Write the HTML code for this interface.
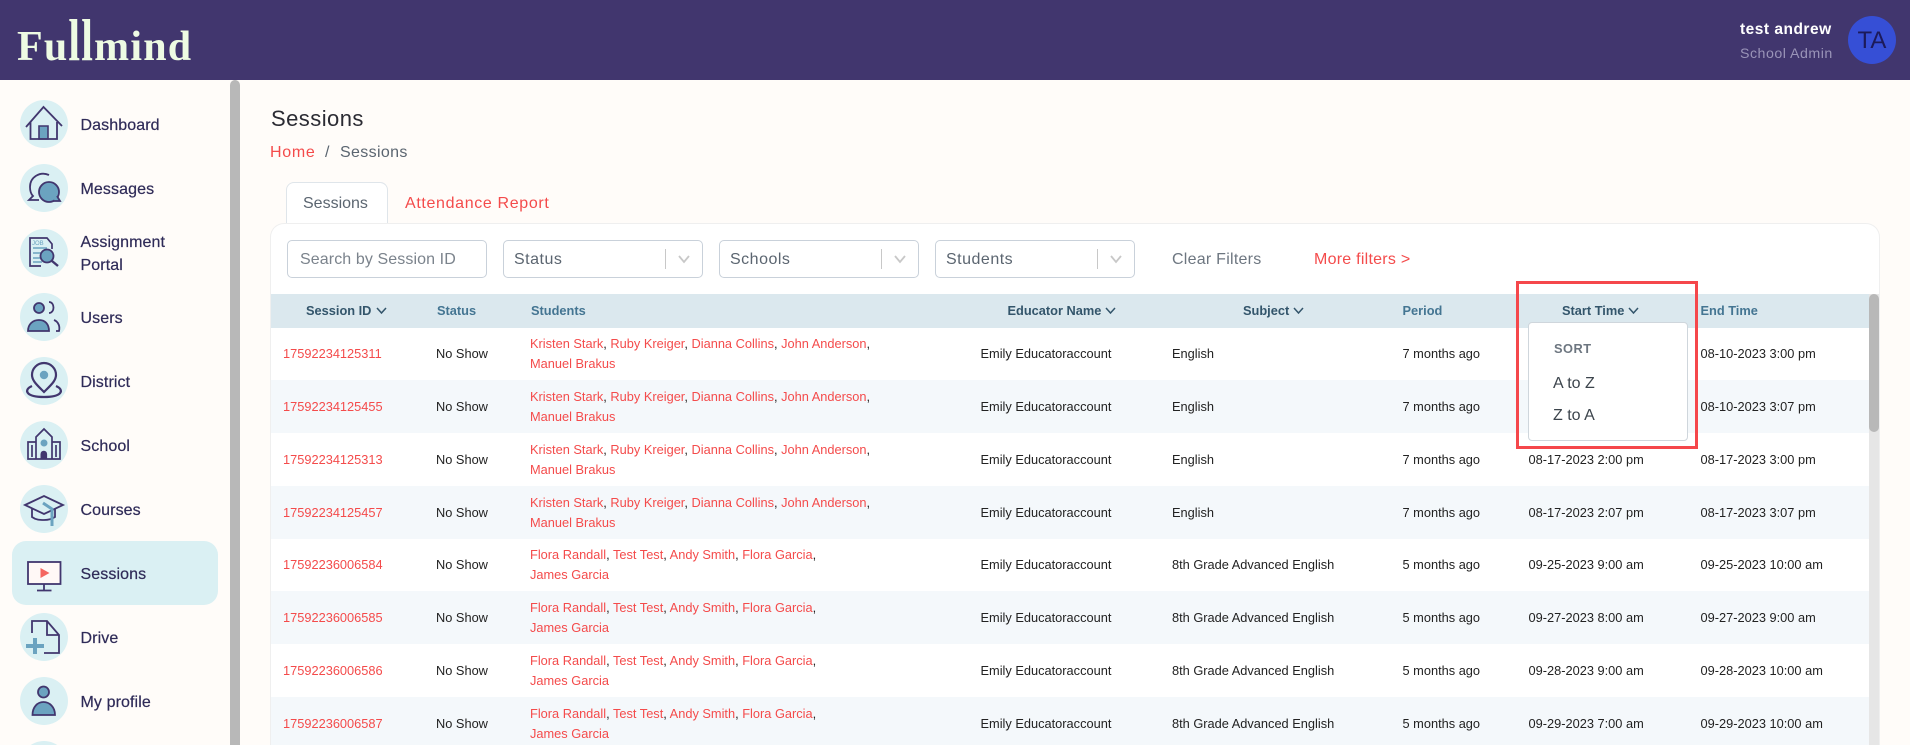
<!DOCTYPE html>
<html style="width:1910px;height:745px;overflow:hidden"><head><meta charset="utf-8"><title>Sessions</title>
<style>
html,body{margin:0;padding:0}
body{position:relative;width:1910px;height:745px;overflow:hidden;background:#fffcf9;font-family:"Liberation Sans",sans-serif;color:#222}
#w{position:absolute;left:0;top:0;width:1910px;height:745px;overflow:hidden}
.a{position:absolute}
.t{position:absolute;white-space:nowrap}
.nav{left:80.5px;font-size:16px;line-height:23px;color:#2f2b58;letter-spacing:.1px;-webkit-text-stroke:.2px #2f2b58}
.ic{position:absolute;left:20px;width:48px;height:48px}
.box{position:absolute;top:240px;height:36px;background:#fff;border:1px solid #c9d1da;border-radius:5px}
.fl{top:250px;font-size:16px;line-height:20px;color:#5b6570}
.sep{position:absolute;top:249px;width:1px;height:20px;background:#c8c8c8}
.c{position:absolute;white-space:nowrap;font-size:12.8px;line-height:19.5px;color:#222}
.r{color:#f44b4b}
.h{position:absolute;top:302px;font-size:12.8px;line-height:18px;font-weight:bold;white-space:nowrap}
.d{color:#33556b}.l{color:#447592}
</style></head><body><div id="w">

<div class="a" style="left:0;top:0;width:1910px;height:80px;background:#41366e"></div>
<!-- logo -->
<div class="t" style="left:17px;top:23px;font:bold 42px/48px 'Liberation Serif',serif;color:#eefbe3;letter-spacing:1.2px">Fu<span style="display:inline-block;transform:scaleY(1.4);transform-origin:50% 78%">ll</span>mind</div>

<div class="t" style="left:1740px;top:20px;font-size:15.5px;line-height:20px;font-weight:bold;color:#fff;letter-spacing:.5px">test andrew</div>
<div class="t" style="left:1740px;top:44px;font-size:14.2px;line-height:20px;color:#9a94b8;letter-spacing:.5px">School Admin</div>
<div class="a" style="left:1848px;top:16px;width:48px;height:48px;border-radius:50%;background:#364fd6;text-align:center;font-size:24px;line-height:50px;color:#1c1a5a">TA</div>

<!-- sidebar -->
<div class="a" style="left:230px;top:80px;width:10px;height:665px;background:#b8b8b8;border-radius:5px 5px 0 0"></div>
<div class="a" style="left:12px;top:541px;width:206px;height:64px;background:#daf0f3;border-radius:14px"></div>

<svg class="ic" style="top:100px" viewBox="0 0 48 48"><circle cx="24" cy="24" r="24" fill="#daf0f3"/><path d="M19 26h9v13h-9z" fill="#6ba3c0" stroke="#41366e" stroke-width="1.6"/><path d="M6 27L23.5 7 42 26M10.5 22v17h26.500V22" fill="none" stroke="#41366e" stroke-width="1.8"/></svg>
<div class="t nav" style="top:114px">Dashboard</div>

<svg class="ic" style="top:164px" viewBox="0 0 48 48"><circle cx="24" cy="24" r="24" fill="#daf0f3"/><path d="M29 11C20 7 10 13 10 23c0 5 2 8 3 9l-4 4h10" fill="none" stroke="#41366e" stroke-width="1.8"/><circle cx="29" cy="28" r="10" fill="#6ba3c0" stroke="#41366e" stroke-width="1.8"/><path d="M33 37h7l-3-5" fill="#6ba3c0" stroke="#41366e" stroke-width="1.8"/></svg>
<div class="t nav" style="top:178px">Messages</div>

<svg class="ic" style="top:229px" viewBox="0 0 48 48"><circle cx="24" cy="24" r="24" fill="#daf0f3"/><path d="M21 37H10V9h17l5 6v5" fill="none" stroke="#41366e" stroke-width="1.7"/><path d="M13 19h14M13 24h8M13 29h7M13 33h9" stroke="#6ba3c0" stroke-width="1.6"/><text x="12" y="16" font-size="6" font-family="Liberation Sans" fill="#6ba3c0">JOB</text><circle cx="27" cy="27" r="6.500" fill="#6ba3c0" stroke="#41366e" stroke-width="1.8"/><path d="M32 32l6 5" stroke="#41366e" stroke-width="2.400"/></svg>
<div class="t nav" style="top:231px">Assignment</div>
<div class="t nav" style="top:254px">Portal</div>

<svg class="ic" style="top:293px" viewBox="0 0 48 48"><circle cx="24" cy="24" r="24" fill="#daf0f3"/><circle cx="19" cy="15" r="5" fill="#6ba3c0" stroke="#41366e" stroke-width="1.800"/><path d="M8 38c0-7 5-11 11-11s10 4 10 11z" fill="#6ba3c0" stroke="#41366e" stroke-width="1.800"/><path d="M29 9c6 0 6 11 0 11M34 27c5 2 6 7 5 11h-3" fill="none" stroke="#41366e" stroke-width="1.800"/></svg>
<div class="t nav" style="top:307px">Users</div>

<svg class="ic" style="top:357px" viewBox="0 0 48 48"><circle cx="24" cy="24" r="24" fill="#daf0f3"/><path d="M24 35C18 29 12 24 12 18a12 12 0 0 1 24 0c0 6-6 11-12 17z" fill="#daf0f3" stroke="#41366e" stroke-width="2.200"/><circle cx="24" cy="18" r="4.200" fill="#6ba3c0"/><path d="M12 29c-9 4-6 11 12 11s21-7 12-11" fill="none" stroke="#41366e" stroke-width="2.200"/></svg>
<div class="t nav" style="top:371px">District</div>

<svg class="ic" style="top:421px" viewBox="0 0 48 48"><circle cx="24" cy="24" r="24" fill="#daf0f3"/><path d="M16 38V16l8-8 8 8v22M16 21H8v17h32V21h-8M12 24v12M36 24v12" fill="none" stroke="#41366e" stroke-width="1.700"/><circle cx="24" cy="22" r="3.500" fill="#6ba3c0"/><path d="M20.500 38v-5a3.300 3.300 0 0 1 6.600 0v5z" fill="#41366e"/></svg>
<div class="t nav" style="top:435px">School</div>

<svg class="ic" style="top:485px" viewBox="0 0 48 48"><circle cx="24" cy="24" r="24" fill="#daf0f3"/><path d="M5 20l19-9 19 9-19 9z" fill="none" stroke="#41366e" stroke-width="1.800"/><path d="M12 24v8c4 3 8 3 12 3s8-1 11-3v-8" fill="none" stroke="#41366e" stroke-width="1.800"/><path d="M23 18l9 6v17" fill="none" stroke="#6ba3c0" stroke-width="3"/></svg>
<div class="t nav" style="top:499px">Courses</div>

<svg class="a" style="left:20px;top:549px" width="48" height="48" viewBox="0 0 48 48"><rect x="8" y="13" width="32.500" height="22" fill="#fff8f6" stroke="#41366e" stroke-width="1.800"/><path d="M24 35v6M17 41.500h14.500" stroke="#41366e" stroke-width="1.800"/><path d="M20.500 19l9 5-9 5z" fill="#f4655f"/></svg>
<div class="t nav" style="top:563px">Sessions</div>

<svg class="ic" style="top:613px" viewBox="0 0 48 48"><circle cx="24" cy="24" r="24" fill="#daf0f3"/><path d="M12 20V8h15l12 14v18H24M27 8v14h12" fill="none" stroke="#41366e" stroke-width="1.800"/><path d="M15 25v16M6 33h18" stroke="#6ba3c0" stroke-width="4"/></svg>
<div class="t nav" style="top:627px">Drive</div>

<svg class="ic" style="top:677px" viewBox="0 0 48 48"><circle cx="24" cy="24" r="24" fill="#daf0f3"/><circle cx="23.500" cy="15" r="5.500" fill="#6ba3c0" stroke="#41366e" stroke-width="1.800"/><path d="M12.500 38c0-8 5-13 11-13s11.500 5 11.500 13z" fill="#6ba3c0" stroke="#41366e" stroke-width="1.800"/></svg>
<div class="t nav" style="top:691px">My profile</div>
<svg class="a" style="left:20px;top:741px" width="48" height="4" viewBox="0 0 48 4"><circle cx="24" cy="24" r="24" fill="#daf0f3"/></svg>

<!-- page head -->
<div class="t" style="left:271px;top:105px;font-size:22px;line-height:28px;color:#2b2b33;letter-spacing:.45px">Sessions</div>
<div class="t" style="left:270px;top:143px;font-size:16px;line-height:20px;color:#f44b4b;letter-spacing:.7px">Home</div>
<div class="t" style="left:325px;top:143px;font-size:16px;line-height:20px;color:#5b6570">/</div>
<div class="t" style="left:340px;top:143px;font-size:16px;line-height:20px;color:#5b6570;letter-spacing:.35px">Sessions</div>

<!-- tabs -->
<div class="a" style="left:286px;top:182px;width:102px;height:45px;box-sizing:border-box;background:#fff;border:1px solid #dfe5ea;border-bottom:0;border-radius:8px 8px 0 0"></div>
<div class="t" style="left:303px;top:194px;font-size:16px;line-height:20px;color:#5b6570">Sessions</div>
<div class="t" style="left:405px;top:194px;font-size:16px;line-height:20px;color:#f44b4b;letter-spacing:.65px">Attendance Report</div>

<!-- card -->
<div class="a" style="left:270px;top:223px;width:1610px;height:522px;box-sizing:border-box;background:#fff;border:1px solid #efefef;border-bottom:0;border-radius:14px 14px 0 0"></div>

<div class="box" style="left:287px;width:198px"></div>
<div class="t fl" style="left:300px;color:#7b838c;letter-spacing:.1px">Search by Session ID</div>
<div class="box" style="left:503px;width:198px"></div><div class="t fl" style="left:514px;letter-spacing:.5px">Status</div><div class="sep" style="left:665px"></div>
<svg class="a" style="left:678px;top:254px" width="12" height="10"><path d="M1 2l5 6 5-6" fill="none" stroke="#c8c8c8" stroke-width="1.800"/></svg>
<div class="box" style="left:719px;width:198px"></div><div class="t fl" style="left:730px;letter-spacing:.5px">Schools</div><div class="sep" style="left:881px"></div>
<svg class="a" style="left:894px;top:254px" width="12" height="10"><path d="M1 2l5 6 5-6" fill="none" stroke="#c8c8c8" stroke-width="1.800"/></svg>
<div class="box" style="left:935px;width:198px"></div><div class="t fl" style="left:946px;letter-spacing:.5px">Students</div><div class="sep" style="left:1097px"></div>
<svg class="a" style="left:1110px;top:254px" width="12" height="10"><path d="M1 2l5 6 5-6" fill="none" stroke="#c8c8c8" stroke-width="1.800"/></svg>
<div class="t fl" style="left:1172px;color:#6d7680;letter-spacing:.25px">Clear Filters</div>
<div class="t fl" style="left:1314px;color:#f44b4b;letter-spacing:.25px">More filters &gt;</div>

<!-- table head -->
<div class="a" style="left:271px;top:294px;width:1598px;height:34px;background:#dbe8ee"></div>
<div class="h d" style="left:306px">Session ID</div>
<svg class="a" style="left:376px;top:307px" width="11" height="8"><path d="M1 1l4.500 5L10 1" fill="none" stroke="#33556b" stroke-width="1.500"/></svg>
<div class="h l" style="left:437px">Status</div>
<div class="h l" style="left:531px">Students</div>
<div class="h d" style="left:1007.500px">Educator Name</div>
<svg class="a" style="left:1105px;top:307px" width="11" height="8"><path d="M1 1l4.500 5L10 1" fill="none" stroke="#33556b" stroke-width="1.500"/></svg>
<div class="h d" style="left:1243px">Subject</div>
<svg class="a" style="left:1293px;top:307px" width="11" height="8"><path d="M1 1l4.500 5L10 1" fill="none" stroke="#33556b" stroke-width="1.500"/></svg>
<div class="h l" style="left:1402.500px">Period</div>
<div class="h d" style="left:1562px">Start Time</div>
<svg class="a" style="left:1628px;top:307px" width="11" height="8"><path d="M1 1l4.500 5L10 1" fill="none" stroke="#33556b" stroke-width="1.500"/></svg>
<div class="h l" style="left:1700.500px">End Time</div>

<!-- rows backgrounds -->
<div class="a" style="left:271px;top:380px;width:1598px;height:53px;background:#f4f8fb"></div>
<div class="a" style="left:271px;top:486px;width:1598px;height:53px;background:#f4f8fb"></div>
<div class="a" style="left:271px;top:591px;width:1598px;height:53px;background:#f4f8fb"></div>
<div class="a" style="left:271px;top:697px;width:1598px;height:48px;background:#f4f8fb"></div>

<!-- row 1 -->
<div class="c r" style="left:283px;top:344px">17592234125311</div><div class="c" style="left:436px;top:344px">No Show</div>
<div class="c" style="left:530px;top:334px"><span class="r">Kristen Stark</span>, <span class="r">Ruby Kreiger</span>, <span class="r">Dianna Collins</span>, <span class="r">John Anderson</span>,<br><span class="r">Manuel Brakus</span></div>
<div class="c" style="left:980.500px;top:344px">Emily Educatoraccount</div><div class="c" style="left:1172px;top:344px">English</div><div class="c" style="left:1402.500px;top:344px">7 months ago</div><div class="c" style="left:1528.500px;top:344px">08-10-2023 2:00 pm</div><div class="c" style="left:1700.500px;top:344px">08-10-2023 3:00 pm</div>
<!-- row 2 -->
<div class="c r" style="left:283px;top:397px">17592234125455</div><div class="c" style="left:436px;top:397px">No Show</div>
<div class="c" style="left:530px;top:387px"><span class="r">Kristen Stark</span>, <span class="r">Ruby Kreiger</span>, <span class="r">Dianna Collins</span>, <span class="r">John Anderson</span>,<br><span class="r">Manuel Brakus</span></div>
<div class="c" style="left:980.500px;top:397px">Emily Educatoraccount</div><div class="c" style="left:1172px;top:397px">English</div><div class="c" style="left:1402.500px;top:397px">7 months ago</div><div class="c" style="left:1528.500px;top:397px">08-10-2023 2:07 pm</div><div class="c" style="left:1700.500px;top:397px">08-10-2023 3:07 pm</div>
<!-- row 3 -->
<div class="c r" style="left:283px;top:450px">17592234125313</div><div class="c" style="left:436px;top:450px">No Show</div>
<div class="c" style="left:530px;top:440px"><span class="r">Kristen Stark</span>, <span class="r">Ruby Kreiger</span>, <span class="r">Dianna Collins</span>, <span class="r">John Anderson</span>,<br><span class="r">Manuel Brakus</span></div>
<div class="c" style="left:980.500px;top:450px">Emily Educatoraccount</div><div class="c" style="left:1172px;top:450px">English</div><div class="c" style="left:1402.500px;top:450px">7 months ago</div><div class="c" style="left:1528.500px;top:450px">08-17-2023 2:00 pm</div><div class="c" style="left:1700.500px;top:450px">08-17-2023 3:00 pm</div>
<!-- row 4 -->
<div class="c r" style="left:283px;top:503px">17592234125457</div><div class="c" style="left:436px;top:503px">No Show</div>
<div class="c" style="left:530px;top:493px"><span class="r">Kristen Stark</span>, <span class="r">Ruby Kreiger</span>, <span class="r">Dianna Collins</span>, <span class="r">John Anderson</span>,<br><span class="r">Manuel Brakus</span></div>
<div class="c" style="left:980.500px;top:503px">Emily Educatoraccount</div><div class="c" style="left:1172px;top:503px">English</div><div class="c" style="left:1402.500px;top:503px">7 months ago</div><div class="c" style="left:1528.500px;top:503px">08-17-2023 2:07 pm</div><div class="c" style="left:1700.500px;top:503px">08-17-2023 3:07 pm</div>
<!-- row 5 -->
<div class="c r" style="left:283px;top:555px">17592236006584</div><div class="c" style="left:436px;top:555px">No Show</div>
<div class="c" style="left:530px;top:545px"><span class="r">Flora Randall</span>, <span class="r">Test Test</span>, <span class="r">Andy Smith</span>, <span class="r">Flora Garcia</span>,<br><span class="r">James Garcia</span></div>
<div class="c" style="left:980.500px;top:555px">Emily Educatoraccount</div><div class="c" style="left:1172px;top:555px">8th Grade Advanced English</div><div class="c" style="left:1402.500px;top:555px">5 months ago</div><div class="c" style="left:1528.500px;top:555px">09-25-2023 9:00 am</div><div class="c" style="left:1700.500px;top:555px">09-25-2023 10:00 am</div>
<!-- row 6 -->
<div class="c r" style="left:283px;top:608px">17592236006585</div><div class="c" style="left:436px;top:608px">No Show</div>
<div class="c" style="left:530px;top:598px"><span class="r">Flora Randall</span>, <span class="r">Test Test</span>, <span class="r">Andy Smith</span>, <span class="r">Flora Garcia</span>,<br><span class="r">James Garcia</span></div>
<div class="c" style="left:980.500px;top:608px">Emily Educatoraccount</div><div class="c" style="left:1172px;top:608px">8th Grade Advanced English</div><div class="c" style="left:1402.500px;top:608px">5 months ago</div><div class="c" style="left:1528.500px;top:608px">09-27-2023 8:00 am</div><div class="c" style="left:1700.500px;top:608px">09-27-2023 9:00 am</div>
<!-- row 7 -->
<div class="c r" style="left:283px;top:661px">17592236006586</div><div class="c" style="left:436px;top:661px">No Show</div>
<div class="c" style="left:530px;top:651px"><span class="r">Flora Randall</span>, <span class="r">Test Test</span>, <span class="r">Andy Smith</span>, <span class="r">Flora Garcia</span>,<br><span class="r">James Garcia</span></div>
<div class="c" style="left:980.500px;top:661px">Emily Educatoraccount</div><div class="c" style="left:1172px;top:661px">8th Grade Advanced English</div><div class="c" style="left:1402.500px;top:661px">5 months ago</div><div class="c" style="left:1528.500px;top:661px">09-28-2023 9:00 am</div><div class="c" style="left:1700.500px;top:661px">09-28-2023 10:00 am</div>
<!-- row 8 -->
<div class="c r" style="left:283px;top:714px">17592236006587</div><div class="c" style="left:436px;top:714px">No Show</div>
<div class="c" style="left:530px;top:704px"><span class="r">Flora Randall</span>, <span class="r">Test Test</span>, <span class="r">Andy Smith</span>, <span class="r">Flora Garcia</span>,<br><span class="r">James Garcia</span></div>
<div class="c" style="left:980.500px;top:714px">Emily Educatoraccount</div><div class="c" style="left:1172px;top:714px">8th Grade Advanced English</div><div class="c" style="left:1402.500px;top:714px">5 months ago</div><div class="c" style="left:1528.500px;top:714px">09-29-2023 7:00 am</div><div class="c" style="left:1700.500px;top:714px">09-29-2023 10:00 am</div>

<!-- scrollbar -->
<div class="a" style="left:1869px;top:294px;width:10px;height:451px;background:#e6e6e6"></div>
<div class="a" style="left:1869px;top:294px;width:10px;height:138px;background:#b8b8b8;border-radius:5px"></div>

<!-- dropdown -->
<div class="a" style="left:1528px;top:322px;width:160px;height:119px;box-sizing:border-box;background:#fff;border:1px solid #cfd6dc;border-radius:4px"></div>
<div class="t" style="left:1554px;top:340px;font-size:12.800px;line-height:18px;font-weight:bold;color:#6d7680;letter-spacing:.5px">SORT</div>
<div class="t" style="left:1553px;top:374px;font-size:16px;line-height:20px;color:#3c444c">A to Z</div>
<div class="t" style="left:1553px;top:406px;font-size:16px;line-height:20px;color:#3c444c">Z to A</div>
<div class="a" style="left:1516px;top:281px;width:182px;height:168px;box-sizing:border-box;border:3px solid #f5474b"></div>
</div></body></html>
